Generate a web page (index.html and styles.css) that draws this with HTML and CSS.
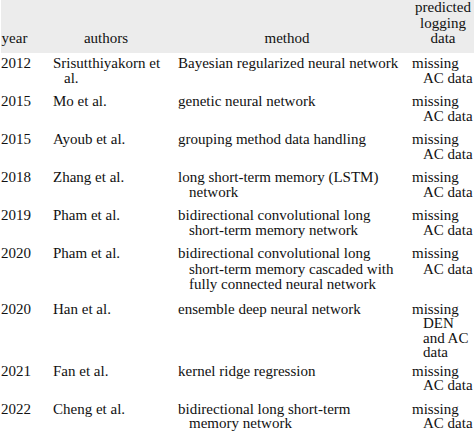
FILE: index.html
```html
<!DOCTYPE html>
<html lang="en">
<head>
<meta charset="utf-8">
<title>Logging data prediction methods</title>
<link rel="stylesheet" href="styles.css">
</head>
<body>
<table class="lit-table">
  <thead>
    <tr>
      <th class="c-year">year</th>
      <th class="c-authors">authors</th>
      <th class="c-method">method</th>
      <th class="c-data">predicted<br>logging<br>data</th>
    </tr>
  </thead>
  <tbody>
    <tr>
      <td class="year">2012</td>
      <td>Srisutthiyakorn et<br>al.</td>
      <td>Bayesian regularized neural network</td>
      <td>missing<br>AC data</td>
    </tr>
    <tr>
      <td class="year">2015</td>
      <td>Mo et al.</td>
      <td>genetic neural network</td>
      <td>missing<br>AC data</td>
    </tr>
    <tr>
      <td class="year">2015</td>
      <td>Ayoub et al.</td>
      <td>grouping method data handling</td>
      <td>missing<br>AC data</td>
    </tr>
    <tr>
      <td class="year">2018</td>
      <td>Zhang et al.</td>
      <td>long short-term memory (LSTM)<br>network</td>
      <td>missing<br>AC data</td>
    </tr>
    <tr>
      <td class="year">2019</td>
      <td>Pham et al.</td>
      <td>bidirectional convolutional long<br>short-term memory network</td>
      <td>missing<br>AC data</td>
    </tr>
    <tr class="row-loose">
      <td class="year">2020</td>
      <td>Pham et al.</td>
      <td>bidirectional convolutional long<br>short-term memory cascaded with<br>fully connected neural network</td>
      <td>missing<br>AC data</td>
    </tr>
    <tr class="row-tight">
      <td class="year">2020</td>
      <td>Han et al.</td>
      <td>ensemble deep neural network</td>
      <td>missing<br>DEN<br>and AC<br>data</td>
    </tr>
    <tr>
      <td class="year">2021</td>
      <td>Fan et al.</td>
      <td>kernel ridge regression</td>
      <td>missing<br>AC data</td>
    </tr>
    <tr>
      <td class="year">2022</td>
      <td>Cheng et al.</td>
      <td>bidirectional long short-term<br>memory network</td>
      <td>missing<br>AC data</td>
    </tr>
  </tbody>
</table>
</body>
</html>
```
FILE: styles.css
```css
html, body {
  margin: 0;
  padding: 0;
  background: #ffffff;
  overflow: hidden;
}

body {
  font-family: "Liberation Serif", Tinos, "DejaVu Serif", serif;
  font-size: 15px;
  color: #111111;
}

.lit-table {
  margin-left: 1px;
  width: 481px;
  table-layout: fixed;
  border-collapse: collapse;
  border-spacing: 0;
  font-family: "Liberation Serif", Tinos, "DejaVu Serif", serif;
}

.lit-table th,
.lit-table td {
  box-sizing: border-box;
  white-space: nowrap;
  font-family: inherit;
}

.lit-table thead tr {
  background: #ececec;
}

.lit-table th {
  font-weight: normal;
  text-align: center;
  vertical-align: bottom;
  line-height: 15.5px;
  padding-top: 0;
  padding-left: 0;
  padding-bottom: 6.5px;
}

.c-year { width: 52px; padding-right: 25px; }
.c-authors { width: 125px; padding-right: 19px; }
.c-method { width: 234px; padding-right: 16px; }
.c-data { width: 70px; padding-right: 8px; }

.lit-table td {
  text-align: left;
  vertical-align: top;
  line-height: 14.5px;
  padding: 3px 0 6px 11px;
  text-indent: -11px;
}

.lit-table td.year {
  padding-left: 0;
  text-indent: 0;
}

.row-loose td {
  line-height: 15.5px;
}

.row-tight td {
  line-height: 14.5px;
  padding-bottom: 1px;
}
```
